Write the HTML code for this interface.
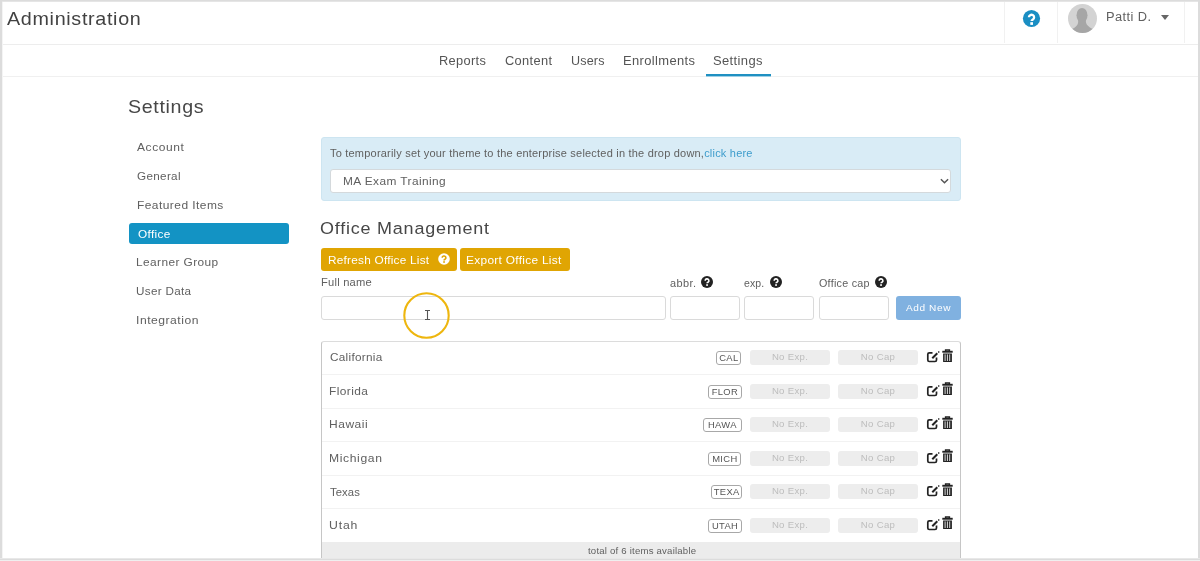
<!DOCTYPE html>
<html><head><meta charset="utf-8"><style>
html,body{margin:0;padding:0;}
body{width:1200px;height:561px;overflow:hidden;position:relative;background:#fff;font-family:"Liberation Sans",sans-serif;}
.page{position:absolute;left:2px;top:2px;width:1196px;height:556px;background:#fff;overflow:hidden;}
.a{position:absolute;box-sizing:border-box;}
.t{position:absolute;white-space:pre;line-height:1;font-family:"Liberation Sans",sans-serif;will-change:transform;}
.hl{position:absolute;height:1px;background:#ececec;}
.vl{position:absolute;width:1px;background:#f1f1f1;}
.inp{position:absolute;box-sizing:border-box;border:1px solid #dadada;border-radius:3px;background:#fff;height:24px;top:296px;}
.q{position:absolute;border-radius:50%;background:#222;}
.badge{position:absolute;box-sizing:border-box;border:1px solid #a8a8a8;border-radius:3px;height:14px;font-size:9.4px;letter-spacing:0.35px;text-indent:0.35px;line-height:12px;color:#555;text-align:center;font-family:"Liberation Sans",sans-serif;will-change:transform;}
.pill{position:absolute;border-radius:3px;height:15px;background:#ededed;color:#bdbdbd;font-size:9.6px;line-height:13px;text-align:center;font-family:"Liberation Sans",sans-serif;letter-spacing:0.3px;will-change:transform;}
.sep{position:absolute;left:322px;width:638px;height:1px;background:#f2f2f2;}
</style></head><body>
<!-- header lines -->
<div class="hl" style="left:2px;top:44px;width:1196px;background:#ededed"></div>
<div class="vl" style="left:1004px;top:2px;height:41px;"></div>
<div class="vl" style="left:1057px;top:2px;height:41px;"></div>
<div class="vl" style="left:1184px;top:2px;height:41px;"></div>
<div class="hl" style="left:2px;top:76px;width:1196px;background:#f0f0f0"></div>
<div class="a" style="left:706px;top:74px;width:65px;height:2px;background:#1f90c2"></div><div class="a" style="left:706px;top:76px;width:65px;height:1px;background:#9fd0e6"></div>
<!-- help icon header -->
<svg class="a" style="left:1022px;top:9px" width="19" height="19" viewBox="0 0 19 19">
<circle cx="9.5" cy="9.5" r="8.6" fill="#1a8ec3"/>
<path d="M6.9 8.3 A2.6 2.5 0 1 1 10.9 10.4 C10.1 10.9 9.6 11.2 9.6 12.1" stroke="#fff" stroke-width="2.3" fill="none"/>
<rect x="8.3" y="13.2" width="2.7" height="2.7" fill="#fff"/>
</svg>
<!-- avatar -->
<svg class="a" style="left:1068px;top:4px" width="29" height="29" viewBox="0 0 29 29">
<defs><clipPath id="cav"><circle cx="14.5" cy="14.5" r="14.5"/></clipPath></defs>
<circle cx="14.5" cy="14.5" r="14.5" fill="#d3d3d3"/>
<g clip-path="url(#cav)" fill="#a6a6a6">
<ellipse cx="14" cy="11.3" rx="5.5" ry="7.4"/>
<path d="M10.2 16 C10.2 20.5 9.5 22.5 3 25.5 L2 30 L27 30 L26 25.5 C19.5 22.5 17.8 20.5 17.8 16 Z"/>
</g>
</svg>
<!-- caret -->
<svg class="a" style="left:1160px;top:14px" width="10" height="7" viewBox="0 0 10 7"><path d="M1 1 L9 1 L5 6 Z" fill="#666"/></svg>
<!-- sidebar highlight -->
<div class="a" style="left:129px;top:223px;width:160px;height:21px;background:#1393c4;border-radius:3px"></div>
<!-- alert -->
<div class="a" style="left:321px;top:137px;width:640px;height:64px;background:#d9ecf6;border:1px solid #cde5f1;border-radius:3px"></div>
<div class="a" style="left:330px;top:169px;width:621px;height:24px;background:#fff;border:1px solid #d4d9dc;border-radius:3px"></div>
<svg class="a" style="left:939px;top:177px" width="11" height="8" viewBox="0 0 11 8"><path d="M1.9 2.2 L5.5 5.7 L9.1 2.2" stroke="#555" stroke-width="1.45" fill="none"/></svg>
<!-- buttons -->
<div class="a" style="left:321px;top:248px;width:136px;height:23px;background:#e0a503;border-radius:3px"></div>
<svg class="a" style="left:438px;top:252.7px" width="12" height="12" viewBox="0 0 12 12">
<circle cx="6" cy="6" r="5.8" fill="#fff"/>
<path d="M4.2 4.8 A1.85 1.8 0 1 1 7 6.3 C6.5 6.6 6.1 6.9 6.1 7.5" stroke="#e0a503" stroke-width="1.6" fill="none"/>
<rect x="5.2" y="8.2" width="1.7" height="1.6" fill="#e0a503"/>
</svg>
<div class="a" style="left:460px;top:248px;width:110px;height:23px;background:#e0a503;border-radius:3px"></div>
<!-- inputs -->
<div class="inp" style="left:321px;width:345px"></div>
<div class="inp" style="left:670px;width:70px"></div>
<div class="inp" style="left:744px;width:70px"></div>
<div class="inp" style="left:819px;width:70px"></div>
<div class="a" style="left:896px;top:296px;width:65px;height:24px;background:#80b1e0;border-radius:3px"></div>
<svg class="a" style="left:701px;top:276px" width="12" height="12" viewBox="0 0 12 12"><circle cx="6" cy="6" r="6" fill="#222"/><path d="M4.2 4.7 A1.85 1.8 0 1 1 7 6.2 C6.5 6.5 6.1 6.8 6.1 7.3" stroke="#fff" stroke-width="1.6" fill="none"/><rect x="5.2" y="8.2" width="1.7" height="1.7" fill="#fff"/></svg>
<svg class="a" style="left:770px;top:276px" width="12" height="12" viewBox="0 0 12 12"><circle cx="6" cy="6" r="6" fill="#222"/><path d="M4.2 4.7 A1.85 1.8 0 1 1 7 6.2 C6.5 6.5 6.1 6.8 6.1 7.3" stroke="#fff" stroke-width="1.6" fill="none"/><rect x="5.2" y="8.2" width="1.7" height="1.7" fill="#fff"/></svg>
<svg class="a" style="left:875px;top:276px" width="12" height="12" viewBox="0 0 12 12"><circle cx="6" cy="6" r="6" fill="#222"/><path d="M4.2 4.7 A1.85 1.8 0 1 1 7 6.2 C6.5 6.5 6.1 6.8 6.1 7.3" stroke="#fff" stroke-width="1.6" fill="none"/><rect x="5.2" y="8.2" width="1.7" height="1.7" fill="#fff"/></svg>
<!-- table -->
<div class="a" style="left:321px;top:341px;width:640px;height:240px;border:1px solid #c6c6c6;border-top-color:#dcdcdc;border-radius:3px"></div>
<div class="a" style="left:322px;top:542px;width:638px;height:30px;background:#ececec"></div>
<div class="badge" style="left:716.2px;top:351.0px;width:25.4px">CAL</div>
<div class="pill" style="left:750px;top:350.1px;width:80px">No Exp.</div>
<div class="pill" style="left:838px;top:350.1px;width:80px">No Cap</div>
<svg class="a" style="left:926px;top:350.1px" width="14" height="13" viewBox="0 0 14 13"><path d="M6.5 2.8 H3.3 C2.2 2.8 1.8 3.3 1.8 4.3 V10 C1.8 11 2.3 11.5 3.3 11.5 H9 C10 11.5 10.5 11 10.5 10 V7.6" stroke="#222" stroke-width="1.7" fill="none"/><path d="M6.3 8.2 L11.3 3.2" stroke="#222" stroke-width="2"/><rect x="12" y="1.3" width="1.4" height="1.4" fill="#222"/></svg>
<svg class="a" style="left:942px;top:348.7px" width="11" height="14" viewBox="0 0 11 14"><path d="M3.6 2 V1.1 H7.4 V2" stroke="#222" stroke-width="1.5" fill="none"/><rect x="0.3" y="1.8" width="10.4" height="1.9" fill="#222"/><rect x="1.1" y="4.5" width="8.8" height="8.5" fill="#222"/><rect x="2.6" y="5.4" width="1" height="6.6" fill="#ddd"/><rect x="4.9" y="5.4" width="1" height="6.6" fill="#ddd"/><rect x="7.2" y="5.4" width="1" height="6.6" fill="#ddd"/></svg>
<div class="sep" style="top:374px"></div>
<div class="badge" style="left:708.1px;top:384.5px;width:33.5px">FLOR</div>
<div class="pill" style="left:750px;top:383.6px;width:80px">No Exp.</div>
<div class="pill" style="left:838px;top:383.6px;width:80px">No Cap</div>
<svg class="a" style="left:926px;top:383.6px" width="14" height="13" viewBox="0 0 14 13"><path d="M6.5 2.8 H3.3 C2.2 2.8 1.8 3.3 1.8 4.3 V10 C1.8 11 2.3 11.5 3.3 11.5 H9 C10 11.5 10.5 11 10.5 10 V7.6" stroke="#222" stroke-width="1.7" fill="none"/><path d="M6.3 8.2 L11.3 3.2" stroke="#222" stroke-width="2"/><rect x="12" y="1.3" width="1.4" height="1.4" fill="#222"/></svg>
<svg class="a" style="left:942px;top:382.2px" width="11" height="14" viewBox="0 0 11 14"><path d="M3.6 2 V1.1 H7.4 V2" stroke="#222" stroke-width="1.5" fill="none"/><rect x="0.3" y="1.8" width="10.4" height="1.9" fill="#222"/><rect x="1.1" y="4.5" width="8.8" height="8.5" fill="#222"/><rect x="2.6" y="5.4" width="1" height="6.6" fill="#ddd"/><rect x="4.9" y="5.4" width="1" height="6.6" fill="#ddd"/><rect x="7.2" y="5.4" width="1" height="6.6" fill="#ddd"/></svg>
<div class="sep" style="top:408px"></div>
<div class="badge" style="left:703.1px;top:418.0px;width:38.5px">HAWA</div>
<div class="pill" style="left:750px;top:417.1px;width:80px">No Exp.</div>
<div class="pill" style="left:838px;top:417.1px;width:80px">No Cap</div>
<svg class="a" style="left:926px;top:417.1px" width="14" height="13" viewBox="0 0 14 13"><path d="M6.5 2.8 H3.3 C2.2 2.8 1.8 3.3 1.8 4.3 V10 C1.8 11 2.3 11.5 3.3 11.5 H9 C10 11.5 10.5 11 10.5 10 V7.6" stroke="#222" stroke-width="1.7" fill="none"/><path d="M6.3 8.2 L11.3 3.2" stroke="#222" stroke-width="2"/><rect x="12" y="1.3" width="1.4" height="1.4" fill="#222"/></svg>
<svg class="a" style="left:942px;top:415.7px" width="11" height="14" viewBox="0 0 11 14"><path d="M3.6 2 V1.1 H7.4 V2" stroke="#222" stroke-width="1.5" fill="none"/><rect x="0.3" y="1.8" width="10.4" height="1.9" fill="#222"/><rect x="1.1" y="4.5" width="8.8" height="8.5" fill="#222"/><rect x="2.6" y="5.4" width="1" height="6.6" fill="#ddd"/><rect x="4.9" y="5.4" width="1" height="6.6" fill="#ddd"/><rect x="7.2" y="5.4" width="1" height="6.6" fill="#ddd"/></svg>
<div class="sep" style="top:441px"></div>
<div class="badge" style="left:708.2px;top:451.5px;width:33.4px">MICH</div>
<div class="pill" style="left:750px;top:450.6px;width:80px">No Exp.</div>
<div class="pill" style="left:838px;top:450.6px;width:80px">No Cap</div>
<svg class="a" style="left:926px;top:450.6px" width="14" height="13" viewBox="0 0 14 13"><path d="M6.5 2.8 H3.3 C2.2 2.8 1.8 3.3 1.8 4.3 V10 C1.8 11 2.3 11.5 3.3 11.5 H9 C10 11.5 10.5 11 10.5 10 V7.6" stroke="#222" stroke-width="1.7" fill="none"/><path d="M6.3 8.2 L11.3 3.2" stroke="#222" stroke-width="2"/><rect x="12" y="1.3" width="1.4" height="1.4" fill="#222"/></svg>
<svg class="a" style="left:942px;top:449.2px" width="11" height="14" viewBox="0 0 11 14"><path d="M3.6 2 V1.1 H7.4 V2" stroke="#222" stroke-width="1.5" fill="none"/><rect x="0.3" y="1.8" width="10.4" height="1.9" fill="#222"/><rect x="1.1" y="4.5" width="8.8" height="8.5" fill="#222"/><rect x="2.6" y="5.4" width="1" height="6.6" fill="#ddd"/><rect x="4.9" y="5.4" width="1" height="6.6" fill="#ddd"/><rect x="7.2" y="5.4" width="1" height="6.6" fill="#ddd"/></svg>
<div class="sep" style="top:475px"></div>
<div class="badge" style="left:710.5px;top:485.0px;width:31.1px">TEXA</div>
<div class="pill" style="left:750px;top:484.1px;width:80px">No Exp.</div>
<div class="pill" style="left:838px;top:484.1px;width:80px">No Cap</div>
<svg class="a" style="left:926px;top:484.1px" width="14" height="13" viewBox="0 0 14 13"><path d="M6.5 2.8 H3.3 C2.2 2.8 1.8 3.3 1.8 4.3 V10 C1.8 11 2.3 11.5 3.3 11.5 H9 C10 11.5 10.5 11 10.5 10 V7.6" stroke="#222" stroke-width="1.7" fill="none"/><path d="M6.3 8.2 L11.3 3.2" stroke="#222" stroke-width="2"/><rect x="12" y="1.3" width="1.4" height="1.4" fill="#222"/></svg>
<svg class="a" style="left:942px;top:482.7px" width="11" height="14" viewBox="0 0 11 14"><path d="M3.6 2 V1.1 H7.4 V2" stroke="#222" stroke-width="1.5" fill="none"/><rect x="0.3" y="1.8" width="10.4" height="1.9" fill="#222"/><rect x="1.1" y="4.5" width="8.8" height="8.5" fill="#222"/><rect x="2.6" y="5.4" width="1" height="6.6" fill="#ddd"/><rect x="4.9" y="5.4" width="1" height="6.6" fill="#ddd"/><rect x="7.2" y="5.4" width="1" height="6.6" fill="#ddd"/></svg>
<div class="sep" style="top:508px"></div>
<div class="badge" style="left:707.7px;top:518.5px;width:33.9px">UTAH</div>
<div class="pill" style="left:750px;top:517.6px;width:80px">No Exp.</div>
<div class="pill" style="left:838px;top:517.6px;width:80px">No Cap</div>
<svg class="a" style="left:926px;top:517.6px" width="14" height="13" viewBox="0 0 14 13"><path d="M6.5 2.8 H3.3 C2.2 2.8 1.8 3.3 1.8 4.3 V10 C1.8 11 2.3 11.5 3.3 11.5 H9 C10 11.5 10.5 11 10.5 10 V7.6" stroke="#222" stroke-width="1.7" fill="none"/><path d="M6.3 8.2 L11.3 3.2" stroke="#222" stroke-width="2"/><rect x="12" y="1.3" width="1.4" height="1.4" fill="#222"/></svg>
<svg class="a" style="left:942px;top:516.2px" width="11" height="14" viewBox="0 0 11 14"><path d="M3.6 2 V1.1 H7.4 V2" stroke="#222" stroke-width="1.5" fill="none"/><rect x="0.3" y="1.8" width="10.4" height="1.9" fill="#222"/><rect x="1.1" y="4.5" width="8.8" height="8.5" fill="#222"/><rect x="2.6" y="5.4" width="1" height="6.6" fill="#ddd"/><rect x="4.9" y="5.4" width="1" height="6.6" fill="#ddd"/><rect x="7.2" y="5.4" width="1" height="6.6" fill="#ddd"/></svg>
<div class="t" style="left:6.50px;top:9.50px;font-size:18.5px;letter-spacing:0.635px;transform:scaleX(1.0664);transform-origin:0 0;color:#424242;font-weight:400">Administration</div>
<div class="t" style="left:438.66px;top:54.70px;font-size:12.3px;letter-spacing:0.317px;transform:scaleX(1.0433);transform-origin:0 0;color:#555555;font-weight:400">Reports</div>
<div class="t" style="left:504.70px;top:54.70px;font-size:12.3px;letter-spacing:0.333px;transform:scaleX(1.0444);transform-origin:0 0;color:#555555;font-weight:400">Content</div>
<div class="t" style="left:570.68px;top:54.70px;font-size:12.3px;letter-spacing:0.162px;transform:scaleX(1.0205);transform-origin:0 0;color:#555555;font-weight:400">Users</div>
<div class="t" style="left:623.15px;top:54.70px;font-size:12.3px;letter-spacing:0.350px;transform:scaleX(1.0519);transform-origin:0 0;color:#555555;font-weight:400">Enrollments</div>
<div class="t" style="left:712.95px;top:54.70px;font-size:12.3px;letter-spacing:0.357px;transform:scaleX(1.0549);transform-origin:0 0;color:#555555;font-weight:400">Settings</div>
<div class="t" style="left:1105.93px;top:11.40px;font-size:12px;letter-spacing:0.407px;transform:scaleX(1.0698);transform-origin:0 0;color:#606060;font-weight:400">Patti D.</div>
<div class="t" style="left:128.24px;top:97.80px;font-size:18.5px;letter-spacing:0.614px;transform:scaleX(1.0620);transform-origin:0 0;color:#474747;font-weight:400">Settings</div>
<div class="t" style="left:137.00px;top:142.40px;font-size:11.2px;letter-spacing:0.525px;transform:scaleX(1.0730);transform-origin:0 0;color:#606060;font-weight:400">Account</div>
<div class="t" style="left:137.00px;top:171.15px;font-size:11.2px;letter-spacing:0.308px;transform:scaleX(1.0453);transform-origin:0 0;color:#606060;font-weight:400">General</div>
<div class="t" style="left:136.53px;top:199.90px;font-size:11.2px;letter-spacing:0.423px;transform:scaleX(1.0692);transform-origin:0 0;color:#606060;font-weight:400">Featured Items</div>
<div class="t" style="left:137.60px;top:228.65px;font-size:11.2px;letter-spacing:0.340px;transform:scaleX(1.0554);transform-origin:0 0;color:#fff;font-weight:400">Office</div>
<div class="t" style="left:136.34px;top:257.40px;font-size:11.2px;letter-spacing:0.387px;transform:scaleX(1.0615);transform-origin:0 0;color:#606060;font-weight:400">Learner Group</div>
<div class="t" style="left:136.36px;top:286.15px;font-size:11.2px;letter-spacing:0.288px;transform:scaleX(1.0440);transform-origin:0 0;color:#606060;font-weight:400">User Data</div>
<div class="t" style="left:136.32px;top:314.90px;font-size:11.2px;letter-spacing:0.475px;transform:scaleX(1.0837);transform-origin:0 0;color:#606060;font-weight:400">Integration</div>
<div class="t" style="left:330.40px;top:147.80px;font-size:10.6px;letter-spacing:0.193px;transform:scaleX(1.0394);transform-origin:0 0;color:#606060;font-weight:400">To temporarily set your theme to the enterprise selected in the drop down,<span style="color:#3d9ccc">click here</span></div>
<div class="t" style="left:343.14px;top:176.40px;font-size:11.2px;letter-spacing:0.393px;transform:scaleX(1.0622);transform-origin:0 0;color:#606060;font-weight:400">MA Exam Training</div>
<div class="t" style="left:320.32px;top:220.70px;font-size:16.7px;letter-spacing:0.737px;transform:scaleX(1.0757);transform-origin:0 0;color:#474747;font-weight:400">Office Management</div>
<div class="t" style="left:327.56px;top:254.70px;font-size:11.3px;letter-spacing:0.233px;transform:scaleX(1.0437);transform-origin:0 0;color:#fff;font-weight:400">Refresh Office List</div>
<div class="t" style="left:466.45px;top:254.70px;font-size:11.3px;letter-spacing:0.279px;transform:scaleX(1.0529);transform-origin:0 0;color:#fff;font-weight:400">Export Office List</div>
<div class="t" style="left:320.67px;top:276.70px;font-size:10.8px;letter-spacing:0.206px;transform:scaleX(1.0346);transform-origin:0 0;color:#606060;font-weight:400">Full name</div>
<div class="t" style="left:670.00px;top:279.00px;font-size:10.3px;letter-spacing:0.375px;transform:scaleX(1.0638);transform-origin:0 0;color:#606060;font-weight:400">abbr.</div>
<div class="t" style="left:744.30px;top:279.00px;font-size:10.3px;letter-spacing:0.117px;transform:scaleX(1.0181);transform-origin:0 0;color:#606060;font-weight:400">exp.</div>
<div class="t" style="left:818.70px;top:279.00px;font-size:10.3px;letter-spacing:0.239px;transform:scaleX(1.0447);transform-origin:0 0;color:#606060;font-weight:400">Office cap</div>
<div class="t" style="left:906.00px;top:303.75px;font-size:9.3px;letter-spacing:0.562px;transform:scaleX(1.0816);transform-origin:0 0;color:#fff;font-weight:400">Add New</div>
<div class="t" style="left:330.40px;top:352.10px;font-size:11.2px;letter-spacing:0.278px;transform:scaleX(1.0505);transform-origin:0 0;color:#606060;font-weight:400">California</div>
<div class="t" style="left:329.33px;top:385.74px;font-size:11.2px;letter-spacing:0.383px;transform:scaleX(1.0652);transform-origin:0 0;color:#606060;font-weight:400">Florida</div>
<div class="t" style="left:329.33px;top:419.38px;font-size:11.2px;letter-spacing:0.500px;transform:scaleX(1.0725);transform-origin:0 0;color:#606060;font-weight:400">Hawaii</div>
<div class="t" style="left:329.31px;top:453.02px;font-size:11.2px;letter-spacing:0.571px;transform:scaleX(1.0851);transform-origin:0 0;color:#606060;font-weight:400">Michigan</div>
<div class="t" style="left:330.40px;top:486.66px;font-size:11.2px;letter-spacing:0.075px;transform:scaleX(1.0102);transform-origin:0 0;color:#606060;font-weight:400">Texas</div>
<div class="t" style="left:329.31px;top:520.30px;font-size:11.2px;letter-spacing:0.767px;transform:scaleX(1.0947);transform-origin:0 0;color:#606060;font-weight:400">Utah</div>
<div class="t" style="left:587.50px;top:547.40px;font-size:9.2px;letter-spacing:0.190px;transform:scaleX(1.0462);transform-origin:0 0;color:#606060;font-weight:400">total of 6 items available</div>
<!-- cursor circle -->
<svg class="a" style="left:403px;top:292px" width="47" height="47" viewBox="0 0 47 47"><circle cx="23.5" cy="23.5" r="22.2" stroke="#eeb60e" stroke-width="2.1" fill="none"/></svg>
<svg class="a" style="left:424px;top:309px" width="7" height="12" viewBox="0 0 7 12"><path d="M1 1.5 H6 M3.5 1.5 V10.5 M1 10.5 H6" stroke="#555" stroke-width="1.1" fill="none"/></svg>
<!-- frame -->
<div class="a" style="left:0;top:0;width:1200px;height:1px;background:#dcdcdc"></div>
<div class="a" style="left:0;top:1px;width:1200px;height:1px;background:#e5e5e5"></div>
<div class="a" style="left:0;top:0;width:2px;height:561px;background:#dcdcdc"></div>
<div class="a" style="left:2px;top:2px;width:1px;height:556px;background:#f4f4f4"></div>
<div class="a" style="left:1198px;top:0;width:2px;height:561px;background:#dcdcdc"></div>
<div class="a" style="left:0;top:558px;width:1200px;height:1px;background:#e8e8e8"></div>
<div class="a" style="left:0;top:559px;width:1200px;height:1px;background:#dcdcdc"></div>
<div class="a" style="left:0;top:560px;width:1200px;height:1px;background:#efefef"></div>
</body></html>
